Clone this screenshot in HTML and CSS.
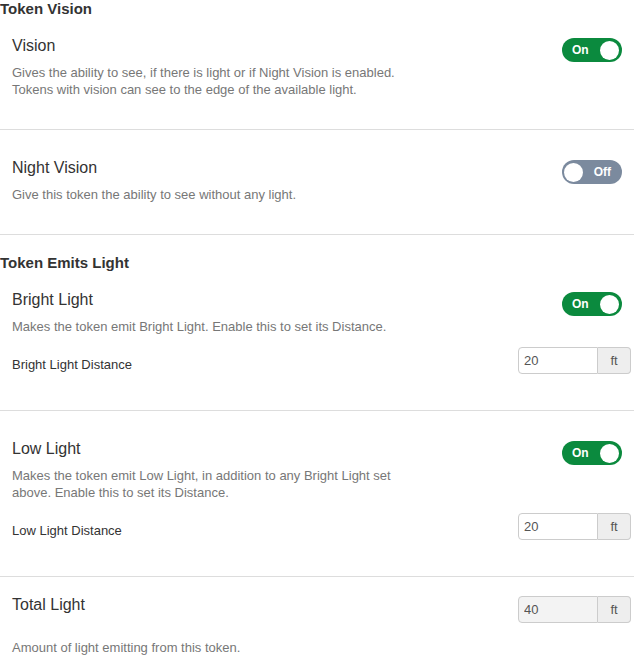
FILE: index.html
```html
<!DOCTYPE html>
<html lang="en">

<head>
    <meta charset="UTF-8" />
    <meta name="viewport" content="width=device-width, initial-scale=1.0" />
    <title>Token Vision</title>
    <link rel="stylesheet" href="styles.css">
</head>

<body>
    <h3 class="section-title first">Token Vision</h3>

    <div class="setting">
        <div class="setting-head">
            <div class="setting-title">Vision</div>
            <span class="toggle on"><span class="toggle-text">On</span><span class="knob"></span></span>
        </div>
        <p class="desc">Gives the ability to see, if there is light or if Night Vision is enabled.<br>Tokens with vision can see to the edge of the available light.</p>
    </div>
    <hr class="divider">

    <div class="setting">
        <div class="setting-head">
            <div class="setting-title">Night Vision</div>
            <span class="toggle off"><span class="knob"></span><span class="toggle-text">Off</span></span>
        </div>
        <p class="desc">Give this token the ability to see without any light.</p>
    </div>
    <hr class="divider">

    <h3 class="section-title">Token Emits Light</h3>

    <div class="setting">
        <div class="setting-head">
            <div class="setting-title">Bright Light</div>
            <span class="toggle on"><span class="toggle-text">On</span><span class="knob"></span></span>
        </div>
        <p class="desc">Makes the token emit Bright Light. Enable this to set its Distance.</p>
        <div class="field">
            <label class="field-label" for="bright">Bright Light Distance</label>
            <div class="input-group">
                <input type="text" id="bright" value="20">
                <span class="addon">ft</span>
            </div>
        </div>
    </div>
    <hr class="divider">

    <div class="setting">
        <div class="setting-head">
            <div class="setting-title">Low Light</div>
            <span class="toggle on"><span class="toggle-text">On</span><span class="knob"></span></span>
        </div>
        <p class="desc">Makes the token emit Low Light, in addition to any Bright Light set<br>above. Enable this to set its Distance.</p>
        <div class="field">
            <label class="field-label" for="low">Low Light Distance</label>
            <div class="input-group">
                <input type="text" id="low" value="20">
                <span class="addon">ft</span>
            </div>
        </div>
    </div>
    <hr class="divider">

    <div class="setting total">
        <div class="setting-head">
            <div class="setting-title">Total Light</div>
            <div class="input-group">
                <input type="text" id="total" value="40" disabled>
                <span class="addon">ft</span>
            </div>
        </div>
        <p class="desc">Amount of light emitting from this token.</p>
    </div>
</body>

</html>
```

FILE: styles.css
```css
body,
html {
    margin: 0;
    padding: 0;
    background: #fff;
    color: #333;
    font-family: "Liberation Sans", Arial, sans-serif;
}

.section-title {
    margin: 19px 0 18px;
    font-size: 15px;
    line-height: 18px;
    font-weight: bold;
    color: #333;
}

.section-title.first {
    margin-top: 0;
}

.setting {
    padding: 28px 3px 31px 12px;
}

.section-title + .setting {
    padding-top: 0;
}

.setting:has(.field) {
    padding-bottom: 36px;
}

.setting-head {
    display: flex;
    justify-content: space-between;
    align-items: flex-start;
}

.setting-title {
    font-size: 16px;
    line-height: 20px;
    color: #333;
}

.desc {
    margin: 2px 0 0;
    font-size: 13px;
    line-height: 17px;
    color: #777;
}

.divider {
    margin: 0;
    border: 0;
    border-top: 1px solid #ddd;
}

/* toggle switch */
.toggle {
    display: flex;
    align-items: center;
    justify-content: space-between;
    box-sizing: border-box;
    width: 60px;
    height: 24px;
    margin: 2px 9px 0 0;
    border-radius: 12px;
    font-size: 12px;
    font-weight: bold;
    color: #fff;
}

.toggle.on {
    background: #0b8a3e;
    padding: 0 3px 0 10px;
}

.toggle.off {
    background: #7b8a9e;
    padding: 0 11px 0 2px;
}

.knob {
    width: 19px;
    height: 19px;
    border-radius: 50%;
    background: #fff;
}

/* distance fields */
.field {
    display: flex;
    justify-content: space-between;
    align-items: flex-start;
    margin-top: 12px;
}

.field-label {
    margin-top: 9px;
    font-size: 13px;
    line-height: 17px;
    color: #333;
}

.input-group {
    display: flex;
}

.input-group input {
    box-sizing: border-box;
    width: 80px;
    height: 27px;
    margin: 0;
    padding: 0 5px;
    border: 1px solid #ccc;
    border-radius: 4px 0 0 4px;
    background: #fff;
    font-family: "Liberation Sans", Arial, sans-serif;
    font-size: 13px;
    color: #555;
    outline: none;
}

.input-group input:disabled {
    background: #f3f3f3;
    color: #555;
}

.addon {
    display: flex;
    align-items: center;
    justify-content: center;
    box-sizing: border-box;
    width: 33px;
    height: 27px;
    border: 1px solid #ccc;
    border-left: 0;
    border-radius: 0 4px 4px 0;
    background: #eee;
    font-size: 13px;
    color: #555;
}

.setting.total {
    padding-top: 19px;
    padding-bottom: 0;
}

.setting.total .setting-title {
    margin-top: -1px;
}

.setting.total .desc {
    margin-top: 16px;
}
```
